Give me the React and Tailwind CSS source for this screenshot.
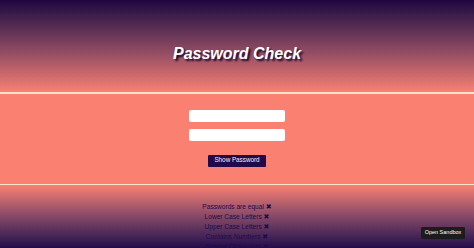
export default function App() {
  const checks = [
    "Passwords are equal",
    "Lower Case Letters",
    "Upper Case Letters",
    "Contains Numbers",
    "Special Characters",
  ];
  return (
    <div className="relative w-[474px] h-[248px] overflow-hidden font-['Liberation_Sans',Arial,sans-serif] bg-[#fa8072]">
      <div className="h-[92px] flex items-center justify-center bg-gradient-to-b from-[#20063f] to-[#fa8072]">
        <h1 className="text-white italic font-bold text-[16px] leading-none mt-[15px] [text-shadow:2px_2px_2px_#1a0630]">
          Password Check
        </h1>
      </div>
      <div className="h-[1.5px] bg-[#fde3cf]" />
      <div className="h-[90px] flex flex-col items-center pt-[16px]">
        <input className="w-[96px] h-[12px] bg-white rounded-[2px] outline-none" />
        <input className="w-[96px] h-[12px] bg-white rounded-[2px] mt-[7px] outline-none" />
        <button className="mt-[14px] w-[58px] h-[12px] bg-[#22094a] text-[#f4eefa] text-[6.3px] leading-none rounded-[1px] flex items-center justify-center">
          Show Password
        </button>
      </div>
      <div className="h-[1.5px] bg-[#fde3cf]" />
      <div className="h-[64px] bg-gradient-to-b from-[#fa8072] to-[#22084a] flex flex-col items-center pt-[17px]">
        {checks.map((c) => (
          <div key={c} className="text-[6.6px] leading-[10px] text-[#22094a] whitespace-nowrap">
            {c} <span className="font-['DejaVu_Sans',sans-serif] text-[7px]">✖</span>
          </div>
        ))}
      </div>
      <div className="absolute right-[9px] bottom-[9px] w-[44px] h-[12px] bg-[#1c1c1c] text-white text-[5.5px] leading-none rounded-[1px] flex items-center justify-center">
        Open Sandbox
      </div>
    </div>
  );
}
